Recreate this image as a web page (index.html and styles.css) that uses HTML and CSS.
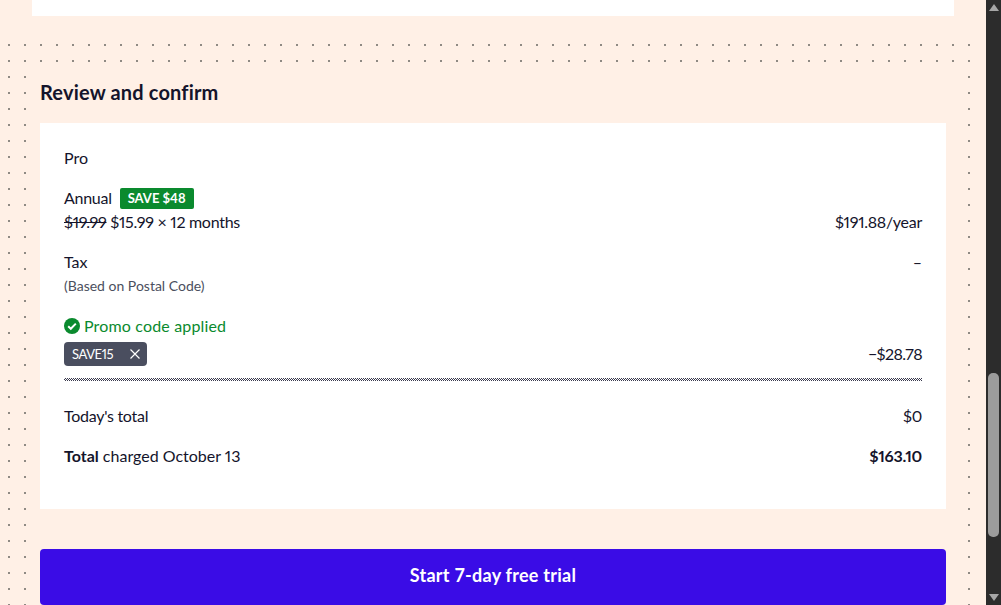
FILE: index.html
```html
<!DOCTYPE html>
<html lang="en">
<head>
<meta charset="utf-8">
<title>Review and confirm</title>
<link rel="stylesheet" href="styles.css">
</head>
<body>
<div class="window">
  <main class="page">
    <div class="top-card"></div>
    <div class="dotted">
      <section class="content">
        <h2 class="heading">Review and confirm</h2>
        <div class="summary">
          <p class="line plan">Pro</p>
          <div class="group billing">
            <div class="annual"><span class="tight">Annual</span><span class="save">SAVE $48</span></div>
            <div class="row"><span class="tight"><s>$19.99</s> $15.99 × 12 months</span><span class="tight">$191.88/year</span></div>
          </div>
          <div class="group tax">
            <div class="row"><span>Tax</span><span>–</span></div>
            <div class="note">(Based on Postal Code)</div>
          </div>
          <div class="group promo">
            <div class="applied">
              <svg class="check" viewBox="0 0 16 16" width="16" height="16" aria-hidden="true"><circle cx="8" cy="8" r="8" fill="#0a8a2e"/><path d="M4.200 8.300l2.600 2.500 5-5.200" fill="none" stroke="#fff" stroke-width="2"/></svg>
              <span>Promo code applied</span>
            </div>
            <div class="row promo-row">
              <span class="chip"><span>SAVE15</span><svg viewBox="0 0 10 10" width="10" height="10" aria-hidden="true"><path d="M.5.5l9 9M9.500.5l-9 9" fill="none" stroke="#fff" stroke-width="1.200"/></svg></span>
              <span class="tighter">−$28.78</span>
            </div>
          </div>
          <div class="rule"></div>
          <div class="row today"><span class="tight">Today's total</span><span class="tight">$0</span></div>
          <div class="row total"><span><b>Total</b> charged October 13</span><b class="tight">$163.10</b></div>
        </div>
        <button class="cta" type="button">Start 7-day free trial</button>
      </section>
    </div>
  </main>
  <aside class="scrollbar" aria-hidden="true">
    <span class="arrow up"></span>
    <span class="track"><span class="thumb"></span></span>
    <span class="arrow down"></span>
  </aside>
</div>
</body>
</html>
```
FILE: styles.css
```css
* { box-sizing: border-box; }
html, body { margin: 0; height: 100%; overflow: hidden; }
body { background: #fff0e6; color: #14142b; font-family: Lato, sans-serif; font-size: 16px; font-variant-numeric: proportional-nums; }
.window { display: flex; height: 605px; }
.page { width: 986px; height: 605px; overflow: hidden; background: #fff0e6; }
.top-card { width: 922px; height: 16px; margin-left: 32px; background: #fff; }
.dotted {
  margin-top: 21px;
  margin-right: 9px;
  height: 600px;
  padding: 32px 16px 0 33px;
  background-image: radial-gradient(circle at 8px 8px, #8f8a84 0, #8f8a84 1px, transparent 1.400px);
  background-size: 16px 16px;
  background-position: 1px 0;
}
.content { background: #fff0e6; padding: 9px 15px 0 7px; }
.heading { margin: 0; font-size: 20px; line-height: 28px; font-weight: 700; letter-spacing: .17px; }
.summary { margin-top: 17px; background: #fff; padding: 23px 24px 24px; height: 386px; }
.line { margin: 0; }
.plan { line-height: 24px; }
.group { margin-top: 16px; }
.tight { letter-spacing: -.28px; }
.tighter { letter-spacing: -.6px; }
.annual { display: flex; align-items: center; gap: 8px; line-height: 24px; }
.save { background: #0a8a2e; color: #fff; font-size: 13px; line-height: 21px; font-weight: 700; padding: 0 8px; border-radius: 2px; margin-bottom: -1px; }
.row { display: flex; justify-content: space-between; align-items: center; line-height: 24px; }
.note { font-size: 14px; line-height: 24px; color: #4b4f5e; }
.applied { display: flex; align-items: center; gap: 4px; color: #0a8a2e; line-height: 24px; letter-spacing: .16px; }
.check { flex: none; }
.promo-row { margin-top: 4px; }
.chip { display: inline-flex; align-items: center; justify-content: space-between; width: 83px; height: 24px; padding: 0 7px 0 8px; border-radius: 4px; background: #4a4e5f; color: #fff; font-size: 13px; letter-spacing: -.4px; }
.rule { height: 3px; margin-top: 12px; background: repeating-conic-gradient(#3a3a4e 0 25%, #fff 0 50%) 0 0 / 2px 2px; }
.today { margin-top: 23px; }
.total { margin-top: 16px; }
.cta { display: block; width: 906px; height: 56px; margin-top: 40px; padding-bottom: 6px; border: 0; border-radius: 4px; background: #3a0ce6; color: #fff; font: 700 18px Lato, sans-serif; letter-spacing: .25px; }
.scrollbar { width: 15px; height: 605px; display: flex; flex-direction: column; align-items: center; background: #2c2c2c; }
.arrow { flex: none; width: 0; height: 0; margin: 4px 0; border-left: 5px solid transparent; border-right: 5px solid transparent; }
.up { border-bottom: 7px solid #a6a6a6; }
.down { border-top: 7px solid #a6a6a6; }
.track { flex: 1; width: 100%; padding-top: 358px; display: block; }
.thumb { display: block; width: 11px; height: 164px; margin-left: 2px; border-radius: 5px; background: #9c9c9c; }
```
